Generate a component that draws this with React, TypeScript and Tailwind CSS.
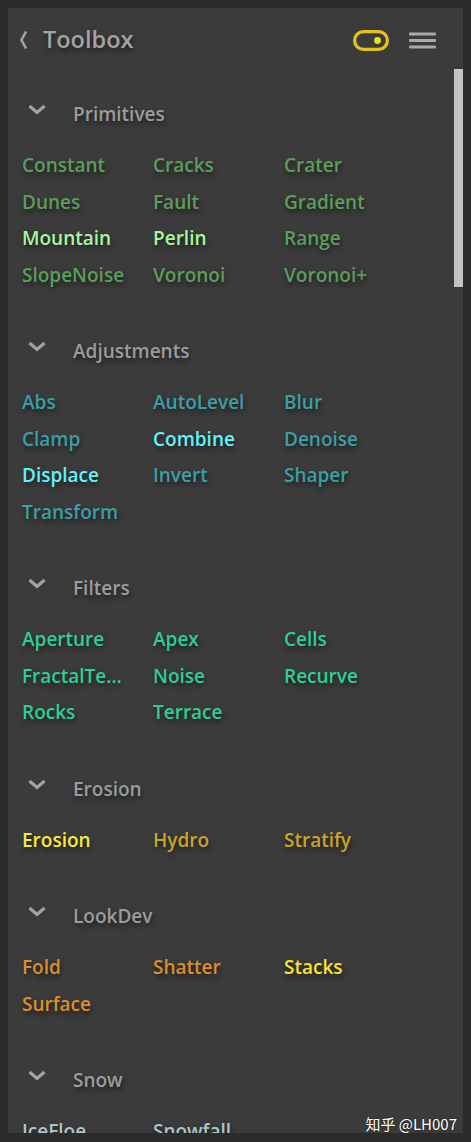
import React from "react";

type Item = { name: string; hi?: boolean };
type Section = { title: string; color: string; hiColor: string; items: Item[] };

const sections: Section[] = [
  {
    title: "Primitives",
    color: "text-[#5b9e5b]",
    hiColor: "text-[#a8f79c]",
    items: [
      { name: "Constant" },
      { name: "Cracks" },
      { name: "Crater" },
      { name: "Dunes" },
      { name: "Fault" },
      { name: "Gradient" },
      { name: "Mountain", hi: true },
      { name: "Perlin", hi: true },
      { name: "Range" },
      { name: "SlopeNoise" },
      { name: "Voronoi" },
      { name: "Voronoi+" },
    ],
  },
  {
    title: "Adjustments",
    color: "text-[#3a9fa6]",
    hiColor: "text-[#62f2f7]",
    items: [
      { name: "Abs" },
      { name: "AutoLevel" },
      { name: "Blur" },
      { name: "Clamp" },
      { name: "Combine", hi: true },
      { name: "Denoise" },
      { name: "Displace", hi: true },
      { name: "Invert" },
      { name: "Shaper" },
      { name: "Transform" },
    ],
  },
  {
    title: "Filters",
    color: "text-[#2ccf94]",
    hiColor: "text-[#2ccf94]",
    items: [
      { name: "Aperture" },
      { name: "Apex" },
      { name: "Cells" },
      { name: "FractalTe…" },
      { name: "Noise" },
      { name: "Recurve" },
      { name: "Rocks" },
      { name: "Terrace" },
    ],
  },
  {
    title: "Erosion",
    color: "text-[#c9a42b]",
    hiColor: "text-[#f7ea3a]",
    items: [{ name: "Erosion", hi: true }, { name: "Hydro" }, { name: "Stratify" }],
  },
  {
    title: "LookDev",
    color: "text-[#db8e2b]",
    hiColor: "text-[#fde036]",
    items: [{ name: "Fold" }, { name: "Shatter" }, { name: "Stacks", hi: true }, { name: "Surface" }],
  },
  {
    title: "Snow",
    color: "text-[#a9c5cd]",
    hiColor: "text-[#a9c5cd]",
    items: [{ name: "IceFloe" }, { name: "Snowfall" }],
  },
];

const shadow = "[text-shadow:1px_3px_5px_rgba(0,0,0,0.5)]";

function SectionBlock({ s }: { s: Section }) {
  return (
    <div className="flex flex-col">
      <div className="flex h-10 items-start pl-[19px]">
        <svg width="20" height="12" viewBox="0 0 20 12" className="mt-[10px] shrink-0">
          <path d="M2.5 2 L10 8.5 L17.5 2" fill="none" stroke="#a3a3a3" strokeWidth="3.2" strokeLinejoin="miter" />
        </svg>
        <span className={`ml-[26px] text-[19px] font-semibold leading-10 text-[#9c9c9c] ${shadow}`}>{s.title}</span>
      </div>
      <div className="mt-[13px] grid grid-cols-[131px_131px_131px] auto-rows-[36.5px] pl-[14px]">
        {s.items.map((it) => (
          <div
            key={it.name}
            className={`whitespace-nowrap text-[19px] font-semibold leading-[36.5px] ${it.hi ? s.hiColor : s.color} ${shadow}`}
          >
            {it.name}
          </div>
        ))}
      </div>
    </div>
  );
}

export default function App() {
  return (
    <div
      className="relative h-[1142px] w-[471px] overflow-hidden bg-[#2b2b2b] p-2"
      style={{ fontFamily: '"Open Sans", "Noto Sans", sans-serif' }}
    >
      <div className="relative h-[1125px] w-[455px] overflow-hidden bg-[#3b3b3b]">
        <div className="flex h-16 items-center pl-[10px] pr-[27px]">
          <svg width="10" height="20" viewBox="0 0 10 20" className="shrink-0">
            <path d="M8 1.5 L3.5 10 L8 18.5" fill="none" stroke="#a0a0a0" strokeWidth="2.6" />
          </svg>
          <span className={`ml-[15px] text-[23.5px] font-semibold leading-none text-[#a3a3a3] ${shadow}`}>Toolbox</span>
          <div className="flex-1" />
          <svg width="36" height="21" viewBox="0 0 36 21" className="shrink-0">
            <rect x="1.6" y="1.6" width="32.8" height="17.8" rx="8.9" fill="none" stroke="#e6c21d" strokeWidth="3.2" />
            <circle cx="24.5" cy="10.5" r="3.4" fill="#ebde22" />
          </svg>
          <svg width="27" height="17" viewBox="0 0 27 17" className="ml-[20px] shrink-0">
            <rect x="0" y="0.5" width="27" height="3" rx="1" fill="#a9a9a9" />
            <rect x="0" y="7" width="27" height="3" rx="1" fill="#a9a9a9" />
            <rect x="0" y="13.5" width="27" height="3" rx="1" fill="#a9a9a9" />
          </svg>
        </div>
        <div className="flex flex-col gap-[38px] pt-[22px]">
          {sections.map((s) => (
            <SectionBlock key={s.title} s={s} />
          ))}
        </div>
        <div className="absolute right-0 top-[61px] h-[218px] w-[9px] bg-[#c3c3c3]" />
      </div>
      <div
        className="absolute bottom-[11px] right-[14px] text-[15px] leading-none text-white [text-shadow:0_0_2px_rgba(0,0,0,0.6)]"
        style={{ fontFamily: '"Noto Sans CJK SC", "Noto Sans", sans-serif' }}
      >
        知乎 @LH007
      </div>
    </div>
  );
}
